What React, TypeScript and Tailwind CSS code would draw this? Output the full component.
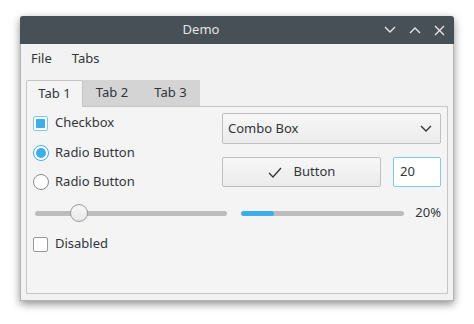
import React from 'react'

const font = { fontFamily: '"Noto Sans", "Open Sans", sans-serif' }

function Chevron({ up = false, className = '' }: { up?: boolean; className?: string }) {
  return (
    <svg width="12" height="8" viewBox="0 0 12 8" className={className}>
      <polyline
        points={up ? '1,7 6,2 11,7' : '1,1 6,6 11,1'}
        fill="none"
        stroke="currentColor"
        strokeWidth="1.4"
      />
    </svg>
  )
}

export default function App() {
  return (
    <div className="w-[474px] h-[324px] bg-white pt-[16px] pl-[20px] text-[13px] text-[#31363b]" style={font}>
      <div className="w-[434px] h-[285px] flex flex-col bg-[#f2f2f2] rounded-t-[3px] border-x border-b border-[#b4b4b4] shadow-[0_3px_9px_rgba(0,0,0,0.45)]">
        {/* title bar */}
        <div className="h-[28px] -mx-px flex items-center bg-[#475057] rounded-t-[3px] text-[#e3e5e7]">
          <div className="flex-1 text-center pl-[2px]">Demo</div>
          <div className="flex items-center gap-[13px] pr-[9px] pl-[4px]">
            <Chevron className="text-[#e3e5e7]" />
            <Chevron up className="text-[#e3e5e7]" />
            <svg width="11" height="11" viewBox="0 0 11 11">
              <path d="M1 1 L10 10 M10 1 L1 10" stroke="#e3e5e7" strokeWidth="1.4" />
            </svg>
          </div>
        </div>

        {/* menu */}
        <div className="h-[30px] flex items-center gap-[20px] pl-[10px]">
          <span>File</span>
          <span>Tabs</span>
        </div>

        <div className="pl-[5px] pr-[5px] pt-[6px] flex-1 flex flex-col">
          {/* tabs */}
          <div className="flex h-[26px] relative z-10">
            <div className="w-[57px] flex items-center justify-center bg-[#f4f4f4] border-x border-t border-[#c6c6c6] rounded-t-[2px] h-[27px]">
              Tab 1
            </div>
            <div className="w-[58px] flex items-center justify-center bg-[#d4d4d4]">Tab 2</div>
            <div className="w-[59px] flex items-center justify-center bg-[#d4d4d4]">Tab 3</div>
          </div>

          {/* pane */}
          <div className="h-[188px] border border-[#c6c6c6] bg-[#f4f4f4] pl-[6px] pr-[6px] pt-[6px] flex flex-col">
            <div className="flex">
              <div className="flex-1 flex flex-col gap-[9.5px]">
                <div className="h-[20px] flex items-center gap-[7px]">
                  <div className="w-[15px] h-[15px] rounded-[2px] border border-[#7fc7ee] bg-white p-[2px]">
                    <div className="w-full h-full bg-[#3daee9] rounded-[1px]" />
                  </div>
                  <span>Checkbox</span>
                </div>
                <div className="h-[20px] flex items-center gap-[6px]">
                  <div className="w-[16px] h-[16px] rounded-full border border-[#3daee9] bg-white p-[2px]">
                    <div className="w-full h-full rounded-full bg-[#3daee9]" />
                  </div>
                  <span>Radio Button</span>
                </div>
                <div className="h-[20px] flex items-center gap-[6px]">
                  <div className="w-[16px] h-[16px] rounded-full border border-[#8a8a8a] bg-white" />
                  <span>Radio Button</span>
                </div>
              </div>

              <div className="w-[219px] flex flex-col">
                <div className="h-[31px] flex items-center justify-between pl-[5px] pr-[8px] border border-[#c0c0c0] rounded-[2px] bg-gradient-to-b from-[#f7f7f7] to-[#ebebeb]">
                  <span>Combo Box</span>
                  <Chevron className="text-[#31363b]" />
                </div>
                <div className="mt-[13px] flex gap-[12px]">
                  <div className="w-[159px] h-[30px] flex items-center justify-center gap-[12px] border border-[#c0c0c0] rounded-[2px] bg-gradient-to-b from-[#f7f7f7] to-[#ebebeb]">
                    <svg width="14" height="11" viewBox="0 0 14 11">
                      <polyline points="1,6 5,10 13,1" fill="none" stroke="#31363b" strokeWidth="1.3" />
                    </svg>
                    <span>Button</span>
                  </div>
                  <div className="w-[48px] h-[30px] flex items-center pl-[6px] border border-[#7fc7ee] rounded-[2px] bg-white">
                    20
                  </div>
                </div>
              </div>
            </div>

            {/* sliders */}
            <div className="mt-[11px] h-[20px] flex items-center">
              <div className="w-[196px] relative h-[20px] flex items-center px-[2px]">
                <div className="w-full h-[5px] rounded-full bg-[#bcbcbc]" />
                <div className="absolute left-[37px] top-[1px] w-[18px] h-[18px] rounded-full border border-[#9b9b9b] bg-gradient-to-b from-[#f8f8f8] to-[#e8e8e8]" />
              </div>
              <div className="ml-[12px] w-[163px] h-[5px] rounded-full bg-[#bcbcbc] overflow-hidden">
                <div className="w-[20%] h-full rounded-full bg-[#3daee9]" />
              </div>
              <span className="ml-auto">20%</span>
            </div>

            <div className="mt-[11px] h-[20px] flex items-center gap-[7px]">
              <div className="w-[15px] h-[15px] rounded-[2px] border border-[#999999] bg-white" />
              <span>Disabled</span>
            </div>
          </div>
        </div>
      </div>
    </div>
  )
}
